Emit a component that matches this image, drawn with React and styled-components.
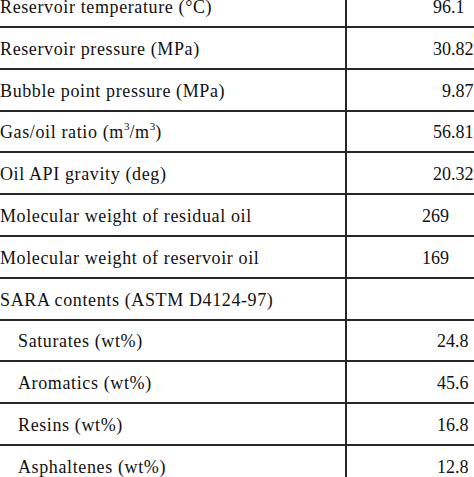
import React from "react";
import styled, { createGlobalStyle } from "styled-components";

const Global = createGlobalStyle`
  html, body { margin: 0; padding: 0; background: #fff; overflow: hidden; }
  body { width: 474px; height: 477px; }
`;

const Table = styled.div`
  display: flex;
  flex-direction: column;
  width: 474px;
  margin-top: -13.8px;
  font-family: "Liberation Serif", "Times New Roman", serif;
  font-size: 18px;
  color: #111;
`;

const Row = styled.div`
  display: grid;
  grid-template-columns: 345px 2px 1fr;
  height: 39.8px;
  border-bottom: 2px solid ${(p) => (p.$last ? "transparent" : "#262626")};
`;

const Label = styled.div`
  display: flex;
  align-items: center;
  padding-left: ${(p) => (p.$indent ? 18 : 0)}px;
  padding-top: 3px;
  letter-spacing: 0.62px;
  white-space: nowrap;
`;

const Divider = styled.div`
  background: #262626;
`;

const Value = styled.div`
  display: flex;
  align-items: center;
  padding-top: 3px;
  white-space: nowrap;
`;

const Int = styled.span`
  display: inline-block;
  width: ${(p) => 104 + (p.$shift || 0)}px;
  text-align: right;
`;

const Frac = styled.span``;

const Sup = styled.span`
  font-size: 11px;
  position: relative;
  top: -7px;
  letter-spacing: 0;
`;

const rows = [
  { label: "Reservoir temperature (°C)", value: "96.1" },
  { label: "Reservoir pressure (MPa)", value: "30.82" },
  { label: "Bubble point pressure (MPa)", value: "9.87" },
  {
    label: (
      <>
        Gas/oil ratio (m<Sup>3</Sup>/m<Sup>3</Sup>)
      </>
    ),
    value: "56.81",
  },
  { label: "Oil API gravity (deg)", value: "20.32" },
  { label: "Molecular weight of residual oil", value: "269", shift: -2 },
  { label: "Molecular weight of reservoir oil", value: "169", shift: -2 },
  { label: "SARA contents (ASTM D4124-97)", value: "" },
  { label: "Saturates (wt%)", value: "24.8", indent: true, shift: 4 },
  { label: "Aromatics (wt%)", value: "45.6", indent: true, shift: 4 },
  { label: "Resins (wt%)", value: "16.8", indent: true, shift: 4 },
  { label: "Asphaltenes (wt%)", value: "12.8", indent: true, shift: 4 },
];

function Num({ value, shift }) {
  if (!value) return null;
  const i = value.indexOf(".");
  const intPart = i >= 0 ? value.slice(0, i) : value;
  const frac = i >= 0 ? value.slice(i) : "";
  return (
    <>
      <Int $shift={shift}>{intPart}</Int>
      <Frac>{frac}</Frac>
    </>
  );
}

export default function App() {
  return (
    <>
      <Global />
      <Table>
        {rows.map((r, idx) => (
          <Row key={idx} $last={idx === rows.length - 1}>
            <Label $indent={r.indent}>{r.label}</Label>
            <Divider />
            <Value>
              <Num value={r.value} shift={r.shift} />
            </Value>
          </Row>
        ))}
      </Table>
    </>
  );
}
